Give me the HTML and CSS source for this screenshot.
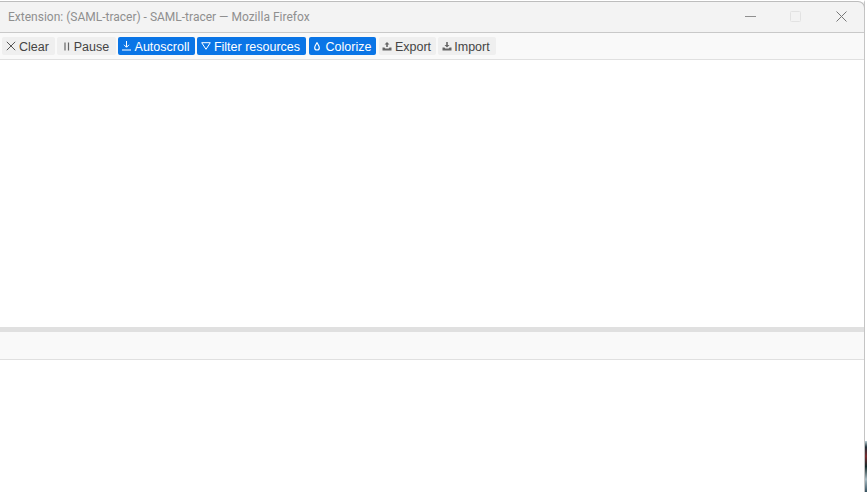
FILE: index.html
```html
<!DOCTYPE html>
<html lang="en">
<head>
<meta charset="utf-8">
<title>Extension: (SAML-tracer) - SAML-tracer — Mozilla Firefox</title>
<link rel="stylesheet" href="styles.css">
</head>
<body>
<div class="screen">
  <div class="window">
    <header class="titlebar">
      <span class="title">Extension: (SAML-tracer) - SAML-tracer — Mozilla Firefox</span>
      <div class="controls">
        <svg class="ctl ctl-min" width="11" height="11" viewBox="0 0 11 11"><path d="M0 5.500h11" stroke="#8f8f8f" fill="none"/></svg>
        <svg class="ctl ctl-max" width="11" height="11" viewBox="0 0 11 11"><rect x=".5" y=".5" width="10" height="10" rx="1" stroke="#e2e2e2" fill="none"/></svg>
        <svg class="ctl ctl-close" width="11" height="11" viewBox="0 0 11 11"><path d="M.5.5l10 10M10.500.5l-10 10" stroke="#777" fill="none"/></svg>
      </div>
    </header>
    <nav class="toolbar">
      <button class="btn b-clear"><svg width="10" height="10" viewBox="0 0 10 10"><path d="M.8.8l8.400 8.400M9.200.8L.8 9.200" stroke="#555" fill="none"/></svg>Clear</button>
      <button class="btn b-pause"><svg width="6" height="9" viewBox="0 0 6 9"><path d="M1 .5v8M4.500 .5v8" stroke="#666" stroke-width="1.200" fill="none"/></svg>Pause</button>
      <button class="btn on b-auto"><svg width="9" height="10" viewBox="0 0 9 10"><path d="M4.500 0v6M2 3.800l2.500 2.500L7 3.800M0 9h9" stroke="#fff" fill="none"/></svg>Autoscroll</button>
      <button class="btn on b-filter"><svg width="10" height="8" viewBox="0 0 10 8"><path d="M.7.700h8.600L5 7.300z" stroke="#fff" fill="none"/></svg>Filter resources</button>
      <button class="btn on b-color"><svg width="6" height="9" viewBox="0 0 6 9"><path d="M3 .8C2 2.500.7 3.800.7 5.700a2.300 2.300 0 0 0 4.600 0C5.300 3.800 4 2.500 3 .8z" stroke="#fff" stroke-width="1.200" fill="none"/></svg>Colorize</button>
      <button class="btn b-export"><svg width="10" height="9" viewBox="0 0 10 9"><path d="M5 0L2.500 2.500h1.700V5h1.600V2.500h1.700z" fill="#666"/><path d="M.5 8.500v-3h2l.8 1h3.400l.8-1h2v3z" fill="#666"/></svg>Export</button>
      <button class="btn b-import"><svg width="10" height="9" viewBox="0 0 10 9"><path d="M5 5.500L2.500 3h1.700V0h1.600v3h1.700z" fill="#666"/><path d="M.5 8.500v-3h2l.8 1h3.400l.8-1h2v3z" fill="#666"/></svg>Import</button>
    </nav>
    <main class="pane pane-top"></main>
    <div class="splitter"></div>
    <div class="subbar"></div>
    <section class="pane pane-bottom"></section>
  </div>
  <div class="desktop"><div class="wallpaper"></div></div>
</div>
</body>
</html>
```

FILE: styles.css
```css
* { box-sizing: border-box; }
html, body { margin: 0; height: 100%; background: #fff; overflow: hidden; }
.screen { display: flex; width: 867px; height: 492px; }
.window {
  width: 865px; height: 492px; display: flex; flex-direction: column;
  background: #fff; border-top: 2px solid #fff; border-right: 1px solid #c4c4c4;
  position: relative;
}
.window::before {
  content: ""; position: absolute; top: -1px; left: 0; right: -1px; height: 8px;
  border-top: 1px solid #bdbdbd; border-right: 1px solid #bdbdbd; border-top-right-radius: 7px;
  pointer-events: none;
}
.titlebar {
  height: 31px; flex: none; display: flex; align-items: center; justify-content: space-between;
  background: #f3f3f3; border-bottom: 1px solid #c9c9c9; padding-left: 8px;
}
.title { font: 12px Roboto, "Liberation Sans", sans-serif; color: #8f8f8f; white-space: nowrap; margin-bottom: 1px; }
.controls { display: flex; align-items: center; gap: 34px; margin-right: 17px; margin-bottom: 2px; }
.ctl { display: block; }
.ctl-close { margin-left: 1px; }
.toolbar {
  height: 27px; flex: none; display: flex; align-items: flex-start; padding: 4px 0 0 2px;
  background: #f9f9f9; border-bottom: 1px solid #e0e0e0;
}
.btn {
  height: 18px; padding: 2px 0 0; border: 0; border-radius: 2px; display: flex; align-items: center;
  justify-content: center; gap: 3px; background: #efefef; color: #444;
  font: 12.500px "Liberation Sans", Arial, sans-serif; white-space: nowrap;
}
.btn svg { flex: none; display: block; margin-bottom: 2px; }
.on { background: #0a75e6; color: #fff; }
.b-clear { width: 53px; margin-right: 2px; padding-right: 2px; }
.b-pause { width: 59px; margin-right: 2px; gap: 4px; }
.b-auto { width: 77px; margin-right: 2px; gap: 4px; padding-right: 2px; }
.b-filter { width: 109px; margin-right: 3px; padding-right: 2px; }
.b-color { width: 67px; margin-right: 3px; gap: 6px; }
.b-export { width: 57px; margin-right: 2px; padding-right: 2px; }
.b-import { width: 58px; padding-right: 2px; gap: 2px; }
.pane { background: #fff; }
.pane-top { height: 267px; flex: none; }
.splitter { height: 5px; flex: none; background: #e0e0e0; }
.subbar { height: 28px; flex: none; background: #f9f9f9; border-bottom: 1px solid #e0e0e0; }
.pane-bottom { flex: 1; }
.desktop { flex: 1; display: flex; flex-direction: column; justify-content: flex-end; }
.wallpaper { height: 51px; background: linear-gradient(#bcd0d6 0, #20303a 12%, #7a2a2e 30%, #142a2a 50%, #a9bcc4 75%, #33505f 100%); }
```
